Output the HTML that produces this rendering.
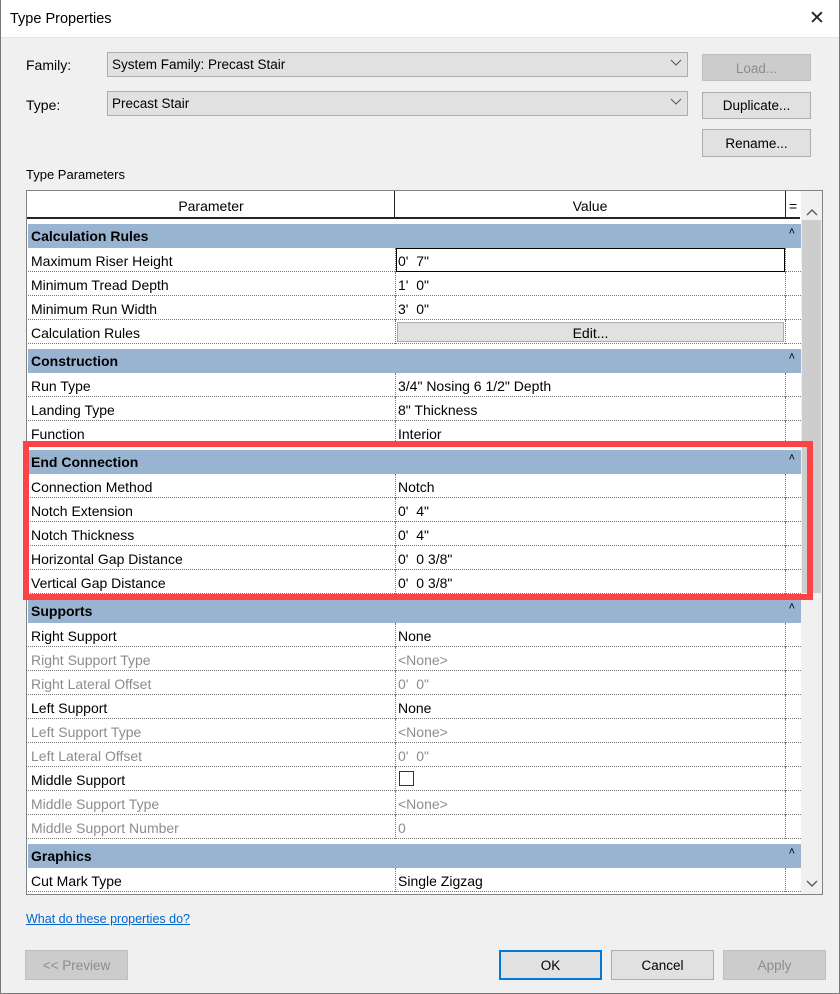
<!DOCTYPE html>
<html><head><meta charset="utf-8"><style>
*{box-sizing:border-box;margin:0;padding:0}
body{width:840px;height:994px;background:#f0f0f0;font-family:"Liberation Sans",sans-serif;font-size:14px;color:#000;position:relative;overflow:hidden}
.a{position:absolute}
.title{left:0;top:0;width:840px;height:38px;background:#fff;border-bottom:1px solid #e5e5e5}
.frame{left:0;top:0;width:840px;height:994px;border:1px solid #777;border-top:none}
.combo{background:#e1e1e1;border:1px solid #adadad;height:25px;padding:4px 0 0 4px;font-size:13.5px}
.btn{background:#e1e1e1;border:1px solid #adadad;text-align:center;font-size:13.5px}
.dis{background:#cccccc;border:1px solid #bfbfbf;color:#8d8d8d}
.grid{left:26px;top:190px;width:797px;height:705px;background:#fff;border:1px solid #828282}
.hdr{height:24px;background:#99b4d1;font-weight:bold;padding:4px 0 0 3px;position:relative}
.hdr:after{content:"\2C4";position:absolute;right:6px;top:2px;font-weight:normal;font-size:11px}
.sec{margin-top:5px}
.row{height:24px;border-bottom:1px dotted #777;position:relative;white-space:nowrap}
.row .p{position:absolute;left:3px;top:5px}
.row .v{position:absolute;left:367px;top:0;width:391px;height:24px;border-left:1px dotted #777;border-right:1px dotted #777;padding:5px 0 0 2px}
.g{color:#8d8d8d}
</style></head><body>
<div class="a title"></div>
<div class="a" style="left:10px;top:11px;font-size:14.5px">Type Properties</div>
<div class="a" style="left:809px;top:7px;font-size:19px;font-weight:100;color:#222">&#x2715;</div>

<div class="a" style="left:26px;top:57px">Family:</div>
<div class="a combo" style="left:107px;top:52px;width:581px">System Family: Precast Stair</div>
<div class="a" style="left:26px;top:97px">Type:</div>
<div class="a combo" style="left:107px;top:91px;width:581px">Precast Stair</div>
<svg class="a" style="left:670px;top:59px" width="12" height="8"><path d="M1 1L6 6L11 1" fill="none" stroke="#555"/></svg>
<svg class="a" style="left:670px;top:98px" width="12" height="8"><path d="M1 1L6 6L11 1" fill="none" stroke="#555"/></svg>

<div class="a btn dis" style="left:702px;top:54px;width:109px;height:27px;padding-top:6px">Load...</div>
<div class="a btn" style="left:702px;top:92px;width:109px;height:27px;padding-top:5px">Duplicate...</div>
<div class="a btn" style="left:702px;top:129px;width:109px;height:28px;padding-top:6px">Rename...</div>

<div class="a" style="left:26px;top:167px;font-size:13px">Type Parameters</div>

<div class="a grid"></div>
<div class="a" style="left:27px;top:191px;width:773px;height:28px;background:#fff;border-bottom:2px solid #222"></div>
<div class="a" style="left:394px;top:191px;width:1px;height:28px;background:#222"></div>
<div class="a" style="left:785px;top:191px;width:1px;height:28px;background:#222"></div>
<div class="a" style="left:28px;top:198px;width:366px;text-align:center">Parameter</div>
<div class="a" style="left:395px;top:198px;width:390px;text-align:center">Value</div>
<div class="a" style="left:789px;top:198px">=</div>
<div class="a" style="left:801px;top:191px;width:21px;height:703px;background:#f0f0f0"></div>
<div class="a" style="left:802px;top:220px;width:19px;height:373px;background:#cdcdcd"></div>
<svg class="a" style="left:806px;top:208px" width="12" height="8"><path d="M1 7L6 2L11 7" fill="none" stroke="#606060" stroke-width="1.5"/></svg>
<svg class="a" style="left:806px;top:880px" width="12" height="8"><path d="M1 1L6 6L11 1" fill="none" stroke="#606060" stroke-width="1.5"/></svg>

<div class="a" style="left:28px;top:224px;width:773px">
<div class="hdr">Calculation Rules</div>
<div class="row"><span class="p">Maximum Riser Height</span><span class="v"><span class="a" style="left:0;top:0;width:389px;height:24px;border:1px solid #000"></span>0'&nbsp; 7"</span></div>
<div class="row"><span class="p">Minimum Tread Depth</span><span class="v">1'&nbsp; 0"</span></div>
<div class="row"><span class="p">Minimum Run Width</span><span class="v">3'&nbsp; 0"</span></div>
<div class="row"><span class="p">Calculation Rules</span><span class="v" style="padding:2px 1px 0 1px"><span style="display:block;height:20px;background:#e1e1e1;border:1px solid #adadad;text-align:center;padding-top:2px">Edit...</span></span></div>
<div class="hdr sec">Construction</div>
<div class="row"><span class="p">Run Type</span><span class="v">3/4" Nosing 6 1/2" Depth</span></div>
<div class="row"><span class="p">Landing Type</span><span class="v">8" Thickness</span></div>
<div class="row"><span class="p">Function</span><span class="v">Interior</span></div>
<div class="hdr sec">End Connection</div>
<div class="row"><span class="p">Connection Method</span><span class="v">Notch</span></div>
<div class="row"><span class="p">Notch Extension</span><span class="v">0'&nbsp; 4"</span></div>
<div class="row"><span class="p">Notch Thickness</span><span class="v">0'&nbsp; 4"</span></div>
<div class="row"><span class="p">Horizontal Gap Distance</span><span class="v">0'&nbsp; 0 3/8"</span></div>
<div class="row"><span class="p">Vertical Gap Distance</span><span class="v">0'&nbsp; 0 3/8"</span></div>
<div class="hdr sec">Supports</div>
<div class="row"><span class="p">Right Support</span><span class="v">None</span></div>
<div class="row g"><span class="p">Right Support Type</span><span class="v">&lt;None&gt;</span></div>
<div class="row g"><span class="p">Right Lateral Offset</span><span class="v">0'&nbsp; 0"</span></div>
<div class="row"><span class="p">Left Support</span><span class="v">None</span></div>
<div class="row g"><span class="p">Left Support Type</span><span class="v">&lt;None&gt;</span></div>
<div class="row g"><span class="p">Left Lateral Offset</span><span class="v">0'&nbsp; 0"</span></div>
<div class="row"><span class="p">Middle Support</span><span class="v"><span class="a" style="left:3px;top:4px;width:15px;height:15px;border:1px solid #333;background:#fff"></span></span></div>
<div class="row g"><span class="p">Middle Support Type</span><span class="v">&lt;None&gt;</span></div>
<div class="row g"><span class="p">Middle Support Number</span><span class="v">0</span></div>
<div class="hdr sec">Graphics</div>
<div class="row"><span class="p">Cut Mark Type</span><span class="v">Single Zigzag</span></div>
</div>

<div class="a" style="left:23px;top:441px;width:790px;height:159px;border:6px solid #ff4245"></div>

<div class="a" style="left:26px;top:912px;font-size:12.5px;color:#0066cc;text-decoration:underline">What do these properties do?</div>

<div class="a btn dis" style="left:25px;top:950px;width:103px;height:30px;padding-top:7px">&lt;&lt; Preview</div>
<div class="a btn" style="left:499px;top:950px;width:103px;height:30px;padding-top:6px;border:2px solid #0078d7">OK</div>
<div class="a btn" style="left:611px;top:950px;width:103px;height:30px;padding-top:7px">Cancel</div>
<div class="a btn dis" style="left:723px;top:950px;width:103px;height:30px;padding-top:7px">Apply</div>
<div class="a frame"></div>
</body></html>
